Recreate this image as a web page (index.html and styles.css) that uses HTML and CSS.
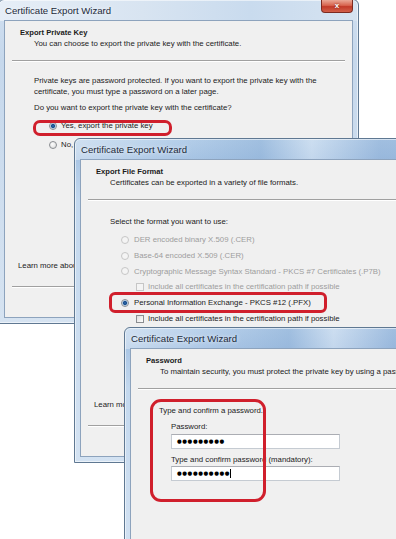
FILE: index.html
```html
<!DOCTYPE html>
<html lang="en">
<head>
  <meta charset="UTF-8">
  <meta name="viewport" content="width=device-width, initial-scale=1.0">
  <title>Certificate Export Wizard</title>
  <link rel="stylesheet" href="styles.css">
</head>
<body>
<div class="desk">

  <!-- first step: private key -->
  <section class="win win-1 win-pale">
    <div class="titlebar">
      <span class="title">Certificate Export Wizard</span>
      <span class="close">x</span>
    </div>
    <div class="client">
      <div class="head">
        <h1>Export Private Key</h1>
        <p>You can choose to export the private key with the certificate.</p>
      </div>
      <div class="body body-key">
        <p class="intro">Private keys are password protected. If you want to export the private key with the<br>certificate, you must type a password on a later page.</p>
        <p class="ask">Do you want to export the private key with the certificate?</p>
        <div class="choices">
          <div class="radio on"><i></i>Yes, export the private key<span class="ring ring-yes"></span></div>
          <div class="radio"><i></i>No, do not export the private key</div>
        </div>
      </div>
      <p class="learn">Learn more about exporting private keys</p>
      <div class="foot"></div>
    </div>
  </section>

  <!-- second step: file format -->
  <section class="win win-2">
    <div class="titlebar">
      <span class="title">Certificate Export Wizard</span>
    </div>
    <div class="client">
      <div class="head">
        <h1>Export File Format</h1>
        <p>Certificates can be exported in a variety of file formats.</p>
      </div>
      <div class="body body-format">
        <p>Select the format you want to use:</p>
        <div class="formats">
          <div class="radio off"><i></i>DER encoded binary X.509 (.CER)</div>
          <div class="radio off"><i></i>Base-64 encoded X.509 (.CER)</div>
          <div class="radio off"><i></i>Cryptographic Message Syntax Standard - PKCS #7 Certificates (.P7B)</div>
          <div class="check off"><i></i>Include all certificates in the certification path if possible</div>
          <div class="radio on"><i></i>Personal Information Exchange - PKCS #12 (.PFX)<span class="ring ring-pfx"></span></div>
          <div class="check"><i></i>Include all certificates in the certification path if possible</div>
        </div>
      </div>
      <p class="learn">Learn more about certificate file formats</p>
      <div class="foot"></div>
    </div>
  </section>

  <!-- third step: password -->
  <section class="win win-3">
    <div class="titlebar">
      <span class="title">Certificate Export Wizard</span>
    </div>
    <div class="client">
      <div class="head">
        <h1>Password</h1>
        <p>To maintain security, you must protect the private key by using a password.</p>
      </div>
      <div class="body body-pass">
        <p>Type and confirm a password.</p>
        <div class="fields">
          <label for="pw1">Password:</label>
          <div class="field" id="pw1">●●●●●●●●●</div>
          <label for="pw2">Type and confirm password (mandatory):</label>
          <div class="field" id="pw2">●●●●●●●●●●<span class="caret"></span></div>
        </div>
        <span class="ring ring-pass"></span>
      </div>
    </div>
  </section>

</div>
</body>
</html>
```

FILE: styles.css
```css
* {
  box-sizing: border-box;
}

body {
  margin: 0;
  background-color: #fff;
  font-family: "Liberation Sans", Arial, sans-serif;
  font-size: 7.8px;
  color: #1b1b1b;
  overflow: hidden;
}

p, h1 {
  margin: 0;
}

.desk {
  position: relative;
  width: 396px;
  height: 539px;
  overflow: hidden;
}

/* window frame */
.win {
  position: absolute;
  display: flex;
  flex-direction: column;
  padding: 0 5px 5px;
  border: 1px solid #5f7892;
  border-radius: 6px 6px 0 0;
  background:
    linear-gradient(90deg, rgba(255,255,255,0.35) 0, rgba(255,255,255,0) 30%, rgba(120,160,205,0.35) 55%, rgba(255,255,255,0.3) 70%, rgba(110,150,200,0.3) 90%) 0 0 / 100% 21px no-repeat,
    linear-gradient(180deg, #b7d0ea 0, #aac6e5 20px, #c3d8ee 60px, #d3e2f2 100%);
  box-shadow: inset 0 0 0 1px rgba(255,255,255,0.55);
}

.win-pale {
  background:
    linear-gradient(90deg, #e6eef7 0, #d8e4f1 40%, #c9dbee 70%, #d6e3f1 100%) 0 0 / 100% 21px no-repeat,
    linear-gradient(180deg, #d0dff0 0, #c6d8ec 60px, #d6e3f1 100%);
}

.win-1 {
  left: -2px;
  top: -1px;
  width: 361px;
  height: 325px;
}

.win-2 {
  left: 74px;
  top: 138px;
  width: 340px;
  height: 325px;
}

.win-3 {
  left: 124px;
  top: 327px;
  width: 300px;
  height: 240px;
}

.titlebar {
  height: 20px;
  display: flex;
  align-items: center;
  padding-left: 1px;
}

.title {
  font-size: 9.6px;
  color: #1c2a3a;
  text-shadow: 0 0 4px #fff;
}

.close {
  margin-left: auto;
  align-self: flex-start;
  width: 32px;
  height: 13px;
  border: 1px solid #7c2a20;
  border-top: none;
  border-radius: 0 0 4px 4px;
  background: linear-gradient(180deg, #eaa896 0, #d8644f 45%, #c23a28 55%, #d2604a 100%);
  color: #fff;
  font-weight: bold;
  font-size: 8px;
  line-height: 12px;
  text-align: center;
  text-shadow: 0 0 2px #6a1a10;
}

.client {
  flex: 1;
  display: flex;
  flex-direction: column;
  background-color: #f0f0f0;
  border: 1px solid #8da3bd;
  line-height: 11px;
  white-space: nowrap;
}

/* wizard header */
.head {
  margin: 0 7px;
  padding: 6px 0 11px 8px;
  border-bottom: 1px solid #a0a0a0;
  box-shadow: 0 1px 0 #fff;
}

.head h1 {
  font-size: 7.6px;
  font-weight: bold;
}

.head p {
  margin-left: 14px;
}

.body {
  position: relative;
  flex: 1;
  padding-left: 29px;
}

.learn {
  padding-left: 13px;
}

.foot {
  height: 31px;
  margin: 15px 7px 0;
  border-top: 1px solid #a0a0a0;
  box-shadow: inset 0 1px 0 #fff;
}

/* step 1 */
.body-key .intro {
  margin-top: 14px;
}

.body-key .ask {
  margin-top: 5px;
}

.choices {
  margin-top: 7px;
  display: flex;
  flex-direction: column;
  gap: 8px;
}

.choices .radio {
  margin-left: 15px;
}

/* step 2 */
.body-format > p {
  margin-top: 16px;
}

.formats {
  margin-top: 5px;
  line-height: 15.8px;
}

.formats .radio {
  margin-left: 11px;
  gap: 5px;
}

.formats .check {
  margin-left: 26px;
}

/* radio buttons and checkboxes */
.radio,
.check {
  position: relative;
  display: flex;
  align-items: center;
  gap: 4px;
}

.radio i {
  width: 8px;
  height: 8px;
  border-radius: 50%;
  border: 1px solid #8a8d91;
  background: radial-gradient(circle at 40% 35%, #fdfdfd 0, #e4e4e4 70%);
}

.radio.on i {
  background: radial-gradient(circle, #2a6bb0 0, #1d4f8c 1.6px, #a8c6e4 2.4px, #eef2f6 3.2px);
}

.check i {
  width: 8px;
  height: 8px;
  border: 1px solid #8a8d91;
  background: linear-gradient(135deg, #dcdcdc, #fff);
}

.off {
  color: #9d9d9d;
}

.off i {
  border-color: #c6c6c6;
  background: #f4f4f4;
}

/* step 3 */
.body-pass {
  padding-left: 28px;
}

.body-pass > p {
  margin-top: 16px;
}

.fields {
  margin-left: 12px;
  display: flex;
  flex-direction: column;
}

.fields label {
  margin-top: 5px;
}

.fields label + .field {
  margin-top: 1.5px;
}

.field {
  width: 169px;
  height: 15px;
  padding-left: 5px;
  display: flex;
  align-items: center;
  background-color: #fff;
  border: 1px solid #c5cbd2;
  border-top-color: #abadb3;
  font-family: "DejaVu Sans", sans-serif;
  font-size: 5.4px;
  letter-spacing: 0.6px;
  color: #000;
}

.caret {
  width: 1px;
  height: 9px;
  background-color: #000;
}

/* red annotation marks */
.ring {
  position: absolute;
  border: 3px solid #d01f2c;
  border-radius: 7px;
  pointer-events: none;
}

.ring-yes {
  left: -16px;
  top: 0;
  width: 139px;
  height: 16px;
}

.ring-pfx {
  left: -12px;
  top: -3px;
  width: 218px;
  height: 21px;
  border-radius: 6px;
}

.ring-pass {
  left: 19px;
  top: 10px;
  width: 116px;
  height: 103px;
  border-radius: 11px;
}
```
